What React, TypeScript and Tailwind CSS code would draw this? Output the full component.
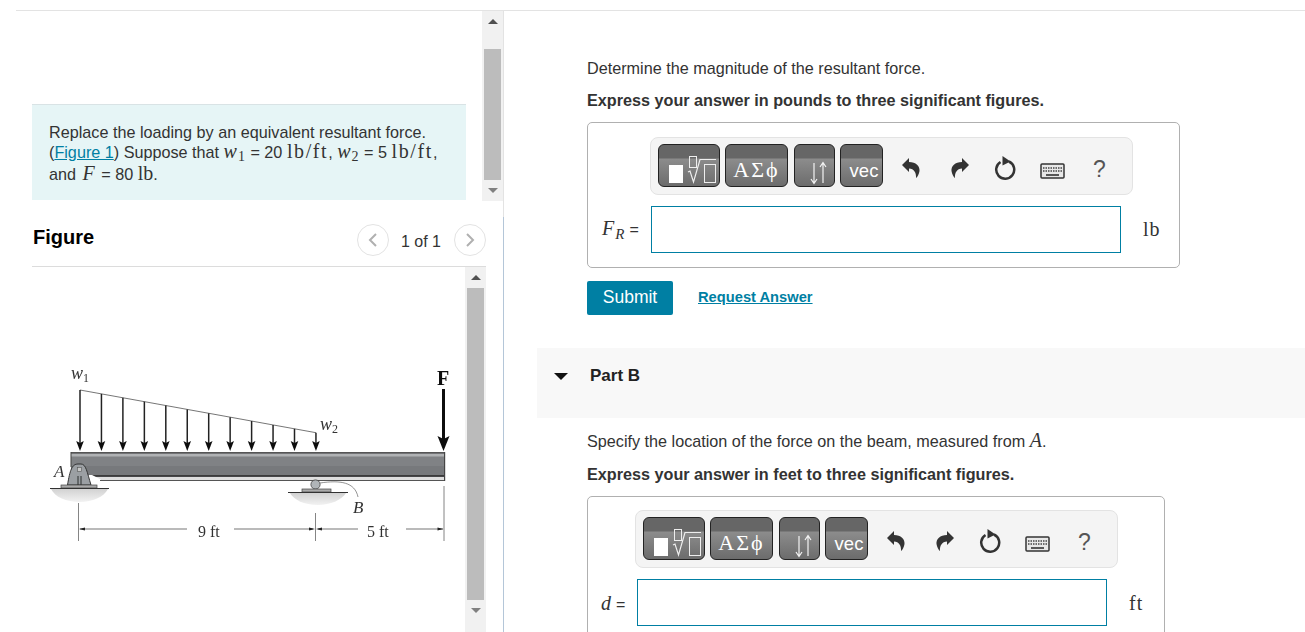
import type { ReactNode } from "react";

const serif = "font-['Liberation_Serif',serif]";
const math = `${serif} text-[20px] leading-none`;

const Scrollbar = ({ top, thumb, className }: { top: number; thumb: number; className: string }) => (
  <div className={`flex flex-col items-center shrink-0 bg-[#f1f1f1] w-[21px] ${className}`}>
    <div className="flex w-full justify-center pt-[8px]" style={{ height: top }}>
      <span className="w-0 h-0 border-x-[5px] border-x-transparent border-b-[5px] border-b-[#505050]" />
    </div>
    <div className="w-[17px] bg-[#bcbcbc]" style={{ height: thumb }} />
    <div className="flex w-full flex-1 justify-center pt-[8px]">
      <span className="w-0 h-0 border-x-[5px] border-x-transparent border-t-[5px] border-t-[#808080]" />
    </div>
  </div>
);

const PaletteButton = ({ className, children }: { className: string; children: ReactNode }) => (
  <button className={`relative mt-[6px] h-[43px] shrink-0 self-start overflow-hidden rounded-[6px] border border-[#222] bg-[linear-gradient(#666_0,#666_13px,#8c8c8c_14px,#6c6c6c_100%)] text-white ${className}`}>
    {children}
  </button>
);

const Toolbar = () => (
  <div className="flex h-[58px] w-[483px] items-center rounded-[8px] border border-[#e3e3e3] bg-[#f4f4f4] pl-[7px]">
    <PaletteButton className="w-[62px]">
      <svg width="60" height="41" viewBox="0 0 60 41" className="block">
        <rect x="10" y="20" width="14" height="18" fill="#fff" />
        <rect x="30.5" y="11.5" width="7" height="11" fill="none" stroke="#eee" />
        <path d="M29 27 L31 26 L34.5 37 L41 14.5 H57" fill="none" stroke="#eee" strokeWidth="1.2" />
        <rect x="45.5" y="19.5" width="11" height="18" fill="none" stroke="#eee" />
      </svg>
    </PaletteButton>
    <PaletteButton className={`ml-[5px] w-[63px] pt-[8px] text-[22px] tracking-[2px] whitespace-nowrap ${serif}`}>ΑΣϕ</PaletteButton>
    <PaletteButton className="ml-[6px] w-[41px]">
      <svg width="39" height="41" viewBox="0 0 39 41" className="block">
        <path d="M19 18 V38 M16 34 L19 38.5 L22 34 M28 38 V18 M25 22 L28 17.5 L31 22" fill="none" stroke="#f4f4f4" strokeWidth="1.2" />
      </svg>
    </PaletteButton>
    <PaletteButton className="ml-[5px] w-[43px] pl-[5px] pt-[10px] font-['Liberation_Sans',sans-serif] text-[18.5px] whitespace-nowrap">vec</PaletteButton>
    <svg width="18" height="22" viewBox="0 0 18 22" className="ml-[19px] mt-[3px] shrink-0">
      <path d="M0 8 L7 1 V5 C14 5 18 9 17.5 14 C17 17 15.5 20 14 21 C14.5 16 12 11.5 7 11.5 V15 Z" fill="#333" />
    </svg>
    <svg width="18" height="22" viewBox="0 0 18 22" className="ml-[31px] mt-[3px] shrink-0">
      <path d="M18 8 L11 1 V5 C4 5 0 9 0.5 14 C1 17 2.5 20 4 21 C3.5 16 6 11.5 11 11.5 V15 Z" fill="#333" />
    </svg>
    <svg width="22" height="26" viewBox="0 0 22 26" className="ml-[25px] mt-[3px] shrink-0">
      <path d="M6.5 7 A9 9 0 1 0 15 6.5" fill="none" stroke="#333" strokeWidth="2.5" />
      <path d="M8.5 1 L16.5 6.5 L8.5 10.5 Z" fill="#333" />
    </svg>
    <svg width="25" height="16" viewBox="0 0 25 16" className="ml-[24px] mt-[10px] shrink-0">
      <rect x="1" y="1" width="23" height="14" rx="1" fill="#e8e8e8" stroke="#333" strokeWidth="1.5" />
      <path d="M3 5 H22 M3 8 H22" stroke="#444" strokeWidth="1.6" strokeDasharray="1.5 1" fill="none" />
      <path d="M6 12 H19" stroke="#333" strokeWidth="1.6" fill="none" />
    </svg>
    <span className="ml-[28px] mt-[6px] font-['Liberation_Sans',sans-serif] text-[23px] text-[#555]">?</span>
  </div>
);

const Figure = () => {
  const xs = Array.from({ length: 12 }, (_, i) => 80 + i * 21.45);
  return (
    <svg width="433" height="210" viewBox="32 350 433 210" className="mt-[83px] block">
      <defs>
        <filter id="soft" x="-5%" y="-5%" width="110%" height="110%">
          <feGaussianBlur stdDeviation="0.4" />
        </filter>
        <linearGradient id="ground" x1="0" y1="0" x2="0" y2="1">
          <stop offset="0" stopColor="#d2d2d2" />
          <stop offset="1" stopColor="#f2f2f2" />
        </linearGradient>
      </defs>
      <g filter="url(#soft)">
        <path d="M80 390 L316 432.7" stroke="#666" strokeWidth="0.9" fill="none" />
        {xs.map((x, i) => (
          <g key={i}>
            <path d={`M${x} ${390 + i * 3.88} V443`} stroke="#222" strokeWidth="1.5" />
            <path d={`M${x - 3.8} 441 L${x} 443 L${x + 3.8} 441 L${x} 451 Z`} fill="#111" />
          </g>
        ))}
        <path d="M443.5 389 V440" stroke="#111" strokeWidth="3" />
        <path d="M437.5 436 L443.5 439 L449.5 436 L443.5 451 Z" fill="#111" />

        <rect x="71" y="452" width="374" height="28" fill="#808285" />
        <rect x="71" y="452" width="374" height="1.3" fill="#555" />
        <rect x="71" y="454" width="374" height="2.5" fill="#b0b2b4" />
        <rect x="71" y="466" width="374" height="9" fill="#77797c" />
        <rect x="88" y="475" width="357" height="1.8" fill="#3a3a3a" />
        <path d="M92 477 H445 V480 H102 Z" fill="#dedede" />
        <path d="M71 475 H92 L102 480 H71 Z" fill="#fff" />
        <rect x="100" y="480" width="345" height="1" fill="#555" />
        <rect x="444" y="452" width="1.2" height="29" fill="#444" />
        <rect x="70.5" y="452" width="1" height="15" fill="#444" />

        <path d="M67.5 485 C70 470 72 464 78 464 H81 C86 464 87 472 91 485 Z" fill="#9b9fa3" stroke="#333" strokeWidth="1" />
        <rect x="77.5" y="467.5" width="4" height="4" fill="#c8c8c8" stroke="#555" strokeWidth="0.6" />
        <path d="M78 476 V485 M81 476 V485" stroke="#222" strokeWidth="0.9" />
        <rect x="61" y="485" width="36" height="3" fill="#aaa" stroke="#444" strokeWidth="0.7" />
        <path d="M50 488.5 H109" stroke="#333" strokeWidth="1" />
        <path d="M51 489 H108 C104 497 92 502 80 502 C66 502 55 497 51 489 Z" fill="url(#ground)" />

        <circle cx="315.5" cy="484.5" r="4.6" fill="#b0b5b8" stroke="#444" strokeWidth="0.8" />
        <path d="M320 483 C340 480 355 482 358 497" stroke="#666" strokeWidth="0.7" fill="none" />
        <rect x="302" y="489" width="29" height="3" fill="#aaa" stroke="#444" strokeWidth="0.7" />
        <path d="M288 492.5 H348" stroke="#333" strokeWidth="1" />
        <path d="M290 493 H346 C342 500 330 505 318 505 C304 505 294 500 290 493 Z" fill="url(#ground)" />

        <path d="M78.5 503 V541 M315.5 513 V541 M444 486 V541" stroke="#777" strokeWidth="0.9" />
        <path d="M80 529 H187 M234 529 H313 M318 529 H358 M406 529 H443" stroke="#666" strokeWidth="0.9" />
        <path d="M79 529 L85 527.5 V530.5 Z M315 529 L309 527.5 V530.5 Z M316 529 L322 527.5 V530.5 Z M443.5 529 L437.5 527.5 V530.5 Z" fill="#222" />

        <g className="font-['Liberation_Serif',serif]" fill="#333">
          <text x="71" y="379" fontSize="18" fontStyle="italic">w</text>
          <text x="83" y="382" fontSize="12">1</text>
          <text x="320" y="430" fontSize="18" fontStyle="italic">w</text>
          <text x="332" y="433" fontSize="12">2</text>
          <text x="437" y="385" fontSize="20" fontWeight="bold" fill="#111">F</text>
          <text x="54" y="477" fontSize="17" fontStyle="italic">A</text>
          <text x="353" y="513" fontSize="17" fontStyle="italic">B</text>
          <text x="198" y="537" fontSize="16">9 ft</text>
          <text x="367" y="537" fontSize="16">5 ft</text>
        </g>
      </g>
    </svg>
  );
};

const App = () => {
  return (
    <div className="h-[632px] w-[1305px] overflow-hidden bg-white pt-[10px] font-['Liberation_Sans',sans-serif] text-[16.2px] text-[#333]">
      <div className="ml-4 h-px bg-[#e3e3e3]" />
      <div className="flex h-[621px]">
        <div className="flex w-[503px] shrink-0 flex-col">
          <div className="flex h-[190px] justify-between pl-8">
            <div className="mt-[93px] h-[96px] w-[434px] border-t border-[#d9e3e5] bg-[#e6f5f6] px-[17px] pt-[17px] leading-[20.8px]">
              <p>Replace the loading by an equivalent resultant force.</p>
              <p className="-mt-[2px]">
                (<a className="text-[#007fa3] underline">Figure 1</a>) Suppose that{" "}
                <span className={`${math} tracking-[1px]`}><i>w</i><sub className="text-[14px] leading-none">1</sub></span> = 20{" "}
                <span className={`${math} tracking-[1.6px]`}>lb/ft</span>,{" "}
                <span className={`${math} tracking-[1px]`}><i>w</i><sub className="text-[14px] leading-none">2</sub></span> = 5{" "}
                <span className={`${math} tracking-[1.6px]`}>lb/ft</span>,
              </p>
              <p>
                and <span className={`${math} px-[2px]`}><i>F</i></span> = 80{" "}
                <span className={math}>lb</span>.
              </p>
            </div>
            <Scrollbar top={38} thumb={131} className="h-[190px]" />
          </div>
          <div className="ml-8 flex h-[66px] w-[454px] items-center border-b border-[#dcdcdc]">
            <h2 className="ml-px mt-[6px] text-[20px] font-bold text-black">Figure</h2>
            <button className="ml-auto mt-[12px] flex h-8 w-8 items-center justify-center rounded-full border border-[#e3e3e3] text-[#b0b0b0]">
              <svg width="10" height="16" viewBox="0 0 10 16"><path d="M8 2 L2 8 L8 14" fill="none" stroke="currentColor" strokeWidth="2" /></svg>
            </button>
            <span className="ml-[12px] mr-[13px] mt-[16px] text-[16px]">1 of 1</span>
            <button className="mt-[12px] flex h-8 w-8 items-center justify-center rounded-full border border-[#e3e3e3] text-[#b0b0b0]">
              <svg width="10" height="16" viewBox="0 0 10 16"><path d="M2 2 L8 8 L2 14" fill="none" stroke="currentColor" strokeWidth="2" /></svg>
            </button>
          </div>
          <div className="ml-8 flex w-[454px] flex-1 justify-between">
            <Figure />
            <Scrollbar top={21} thumb={312} className="h-full" />
          </div>
        </div>
        <div className="flex w-[1px] shrink-0 flex-col">
          <div className="h-[206px] bg-[#e3e3e3]" />
          <div className="flex-1 bg-[#b4c6d8]" />
        </div>
        <div className="flex-1 pl-[33px]">
          <div className="pl-[50px] pt-[46px]">
            <p className="leading-[22px]">Determine the magnitude of the resultant force.</p>
            <p className="mt-[10px] font-bold leading-[22px]">Express your answer in pounds to three significant figures.</p>
            <div className="mt-[11px] h-[146px] w-[593px] rounded-[5px] border border-[#b0b0b0] pl-[62px] pt-[14px]">
              <Toolbar />
              <div className="-ml-[62px] mt-[11px] flex items-center">
                <span className={`w-[63px] pb-[3px] pl-[14px] whitespace-nowrap ${math}`}>
                  <i>F</i><sub className="ml-px text-[15px] leading-none"><i>R</i></sub>{" "}<span className="font-['Liberation_Sans',sans-serif] text-[16px]">=</span>
                </span>
                <div className="h-[47px] w-[470px] border border-[#007fa3] bg-white" />
                <span className={`ml-[22px] pb-[1px] tracking-[1px] ${math}`}>lb</span>
              </div>
            </div>
            <div className="mt-[13px] flex items-center">
              <button className="h-[34px] w-[86px] rounded-[2px] bg-[#007fa3] pb-[2px] text-[17.5px] text-white">Submit</button>
              <a className="ml-[25px] pb-[2px] text-[14.7px] font-bold text-[#007fa3] underline">Request Answer</a>
            </div>
          </div>
          <div className="mt-[33px] h-[70px] bg-[#f8f8f8] pt-[17px]">
            <div className="flex items-center">
              <span className="ml-[17px] h-0 w-0 border-x-[7px] border-t-[7px] border-x-transparent border-t-[#111]" />
              <h3 className="ml-[22px] text-[17px] font-bold leading-[22px] text-[#222]">Part B</h3>
            </div>
          </div>
          <div className="pl-[50px] pt-[12px]">
            <p className="leading-[22px]">
              Specify the location of the force on the beam, measured from{" "}
              <span className={math}><i>A</i></span>.
            </p>
            <p className="mt-[11px] font-bold leading-[22px]">Express your answer in feet to three significant figures.</p>
            <div className="mt-[11px] h-[160px] w-[578px] rounded-[5px] border border-[#b0b0b0] pl-[47px] pt-[13px]">
              <Toolbar />
              <div className="-ml-[47px] mt-[11px] flex items-center">
                <span className={`w-[49px] pl-[13px] whitespace-nowrap ${math}`}>
                  <i>d</i> <span className="font-['Liberation_Sans',sans-serif] text-[16px]">=</span>
                </span>
                <div className="h-[47px] w-[470px] border border-[#007fa3] bg-white" />
                <span className={`ml-[22px] tracking-[1px] ${math}`}>ft</span>
              </div>
            </div>
          </div>
        </div>
      </div>
    </div>
  );
};

export default App;
